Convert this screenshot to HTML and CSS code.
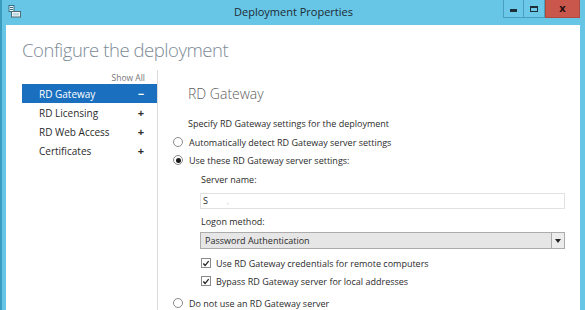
FILE: index.html
```html
<!DOCTYPE html>
<html>
<head>
<meta charset="utf-8">
<link rel="stylesheet" href="styles.css">
</head>
<body>
<div class="window">
  <div class="titlebar">
    <svg class="app-icon" width="14" height="13" viewBox="0 0 14 13">
      <rect x="1" y="0.5" width="5" height="6" fill="#e9f6fb" stroke="#3b6f86" stroke-width="1"/>
      <line x1="2" y1="2.5" x2="5" y2="2.5" stroke="#3b6f86"/>
      <line x1="2" y1="4.5" x2="5" y2="4.5" stroke="#3b6f86"/>
      <rect x="3.5" y="6.5" width="9" height="5.5" fill="#f2f2f2" stroke="#4d6a78" stroke-width="1"/>
      <rect x="5" y="8" width="6" height="2.5" fill="#b9d7e4"/>
    </svg>
    <div class="title">Deployment Properties</div>
    <div class="caption-buttons">
      <div class="cbtn min"><span class="min-glyph"></span></div>
      <div class="cbtn max"><span class="max-glyph"></span></div>
      <div class="cbtn close">x</div>
    </div>
  </div>
  <div class="client">
    <h1 class="page-title">Configure the deployment</h1>
    <div class="main">
      <nav class="nav">
        <div class="show-all">Show All</div>
        <div class="nav-item selected"><span>RD Gateway</span><span class="sign">−</span></div>
        <div class="nav-item"><span>RD Licensing</span><span class="sign">+</span></div>
        <div class="nav-item"><span>RD Web Access</span><span class="sign">+</span></div>
        <div class="nav-item"><span>Certificates</span><span class="sign">+</span></div>
      </nav>
      <section class="content">
        <h2 class="section-title">RD Gateway</h2>
        <div class="desc">Specify RD Gateway settings for the deployment</div>
        <div class="opt"><span class="radio"></span>Automatically detect RD Gateway server settings</div>
        <div class="opt"><span class="radio on"></span>Use these RD Gateway server settings:</div>
        <div class="sub">
          <div class="label label1">Server name:</div>
          <div class="textbox">S<span class="blur">&nbsp;&nbsp;&nbsp;&nbsp;&nbsp;&nbsp;&nbsp;&nbsp;,</span></div>
          <div class="label label2">Logon method:</div>
          <div class="select"><span class="select-text">Password Authentication</span><span class="arrow"><svg width="6" height="4" viewBox="0 0 6 4"><path d="M0 0H6L3 4Z" fill="#222"/></svg></span></div>
          <div class="check-row first"><span class="check"><svg width="9" height="9" viewBox="0 0 9 9"><path d="M1.5 4.5L3.5 6.8L7.5 1.8" fill="none" stroke="#222" stroke-width="1.5"/></svg></span>Use RD Gateway credentials for remote computers</div>
          <div class="check-row"><span class="check"><svg width="9" height="9" viewBox="0 0 9 9"><path d="M1.5 4.5L3.5 6.8L7.5 1.8" fill="none" stroke="#222" stroke-width="1.5"/></svg></span>Bypass RD Gateway server for local addresses</div>
        </div>
        <div class="opt last"><span class="radio"></span>Do not use an RD Gateway server</div>
      </section>
    </div>
  </div>
</div>
</body>
</html>
```

FILE: styles.css
```css
* { box-sizing: border-box; }
html, body { margin: 0; padding: 0; }
body {
  width: 585px;
  height: 310px;
  overflow: hidden;
  font-family: "Open Sans", "Noto Sans", "DejaVu Sans", sans-serif;
  color: #2b2b2b;
}
.window {
  width: 585px;
  height: 310px;
  background: #67c6e6;
  border-left: 2px solid #3a9cbf;
  display: flex;
  flex-direction: column;
}
.titlebar {
  height: 25px;
  flex: none;
  display: flex;
  align-items: flex-start;
  position: relative;
}
.app-icon { margin: 5px 0 0 6px; }
.title {
  position: absolute;
  left: 0; right: 0; top: 4px;
  text-align: center;
  font-size: 11px;
  color: #1d2b33;
}
.caption-buttons {
  position: absolute;
  top: 0;
  right: 5px;
  display: flex;
  height: 18px;
}
.cbtn {
  height: 18px;
  border: 1px solid #4a9fbf;
  border-top: none;
  display: flex;
  align-items: center;
  justify-content: center;
}
.min { width: 21px; background: #6cc8e8; }
.max { width: 21px; background: #6cc8e8; border-left: none; }
.close {
  width: 35px;
  background: #c9574c;
  border-color: #b04a40;
  color: #2a1010;
  font-weight: bold;
  font-size: 11px;
  line-height: 1;
  padding-bottom: 3px;
}
.min-glyph { width: 7px; height: 3px; background: #1e2e36; margin-top: 4px; }
.max-glyph { width: 8px; height: 6px; border: 1px solid #1e2e36; border-top-width: 2px; }
.client {
  flex: 1;
  background: #fff;
  margin: 0 5px 0 4px;
  padding-left: 16px;
  overflow: hidden;
}
.page-title {
  margin: 12px 0 0 0;
  font-size: 18.5px;
  line-height: 26px;
  font-weight: 300;
  color: #7d8a96;
  letter-spacing: -0.45px;
}
.main {
  display: flex;
  margin-top: 7px;
}
.nav {
  width: 136px;
  border-right: 1px solid #dcdcdc;
  height: 260px;
  flex: none;
  font-size: 10px;
}
.show-all {
  text-align: right;
  padding-right: 12px;
  height: 14px;
  line-height: 15px;
  font-size: 8.5px;
  color: #777;
}
.nav-item {
  height: 19px;
  display: flex;
  align-items: center;
  justify-content: space-between;
  padding: 0 13px 0 17px;
  color: #2b2b2b;
}
.nav-item.selected {
  background: #1a6fbf;
  color: #fff;
}
.sign { font-weight: bold; font-size: 11px; }
.content {
  padding-left: 15px;
  flex: 1;
  font-size: 9px;
}
.section-title {
  margin: 14px 0 0 15px;
  font-size: 14px;
  line-height: 20px;
  font-weight: 300;
  color: #5e5e5e;
}
.desc {
  margin: 11px 0 0 15px;
  line-height: 18px;
}
.opt {
  height: 18px;
  display: flex;
  align-items: center;
}
.opt.last { margin-top: 4px; }
.radio {
  width: 10px;
  height: 10px;
  border: 1px solid #8a8a8a;
  border-radius: 50%;
  margin-right: 6px;
  display: inline-flex;
  align-items: center;
  justify-content: center;
  background: #fff;
}
.radio.on::after {
  content: "";
  width: 5px;
  height: 5px;
  border-radius: 50%;
  background: #1b1b1b;
}
.sub {
  padding-left: 27px;
  width: 392px;
}
.label {
  height: 19px;
  line-height: 19px;
  padding-left: 1px;
}
.label1 { margin-top: 1px; }
.label2 { margin-top: 4px; height: 18px; line-height: 18px; }
.textbox {
  margin-top: 4px;
  height: 16px;
  border: 1px solid #e2e2e2;
  padding-left: 2px;
  line-height: 14px;
  font-size: 9px;
}
.blur { color: #d0d0d0; }
.select {
  margin-top: 1px;
  height: 17px;
  border: 1px solid #acacac;
  background: #e6e6e6;
  display: flex;
  align-items: center;
  justify-content: space-between;
}
.select-text { padding-left: 4px; }
.arrow {
  width: 13px;
  height: 15px;
  border-left: 1px solid #acacac;
  display: flex;
  align-items: center;
  justify-content: center;
  background: #ececec;
}
.check-row {
  height: 18px;
  display: flex;
  align-items: center;
  padding-left: 1px;
}
.check-row.first { margin-top: 5px; }
.check {
  width: 10px;
  height: 10px;
  border: 1px solid #8a8a8a;
  margin-right: 5px;
  display: inline-flex;
  align-items: center;
  justify-content: center;
  background: #fff;
}
```
